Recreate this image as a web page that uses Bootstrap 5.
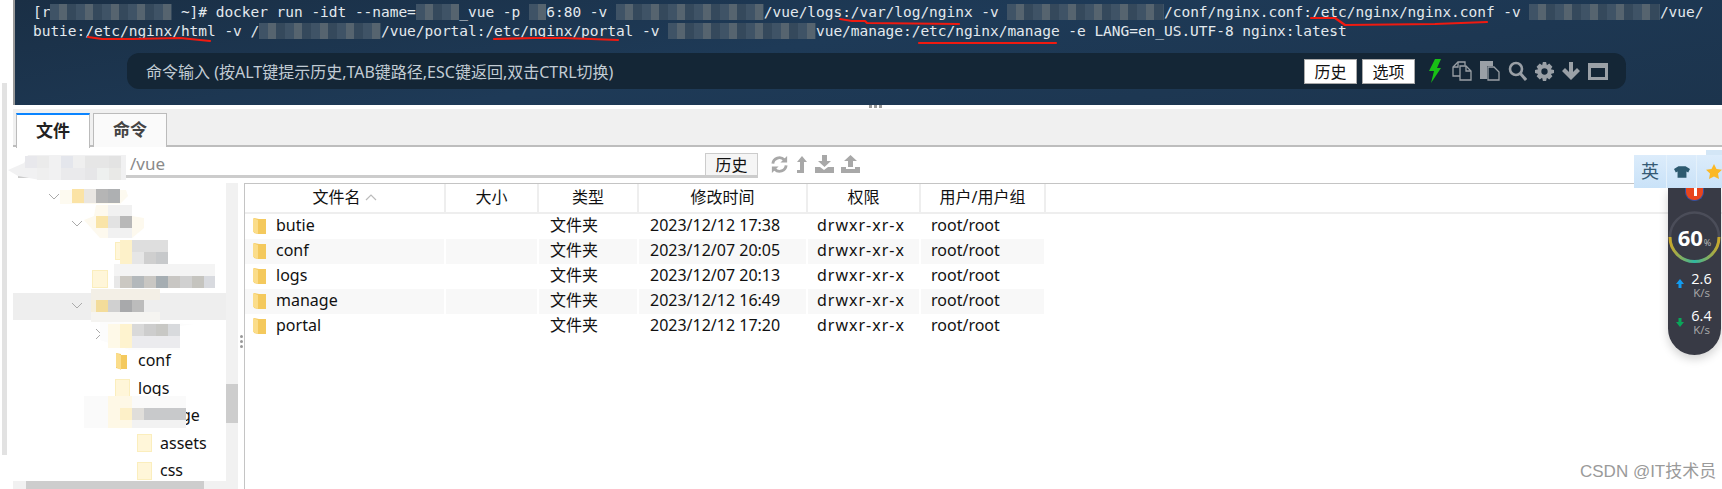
<!DOCTYPE html>
<html lang="zh">
<head>
<meta charset="utf-8">
<title>FinalShell</title>
<link href="https://cdn.jsdelivr.net/npm/bootstrap@5.3.0/dist/css/bootstrap.min.css" rel="stylesheet">
<style>
html,body{height:489px;overflow:hidden;background:#fff}
body{position:relative;font-family:"Noto Sans","Noto Sans CJK SC",sans-serif;font-size:16px;color:#111;line-height:1.2}
.shell{height:489px}
.edge{width:13px;background:#fff;padding:83px 6px 34px 2px}
.edge-bar{height:100%;background:linear-gradient(180deg,#e2e2e2 0 372px,#f6f6f6 372px)}
.term{height:105px;background:linear-gradient(170deg,#1a2f45 0%,#1e3a57 45%,#1c344d 100%);color:#e3e9ee;padding:3px 0 0 18px;border-left:2px solid #999}
.tline{font-family:"DejaVu Sans Mono",monospace;font-size:14.5px;line-height:19px;white-space:pre;letter-spacing:-.03px}
.mos{background:repeating-linear-gradient(90deg,#3f5366 0 9px,#56646f 9px 17px,#35495c 17px 26px);color:transparent}
.cmdbar{height:36px;margin:12px 96px 0 94px;padding:0 18px 0 19px;background:#142636;border-radius:12px;color:#c2ccd4;font-size:16px}
.cmdhint{padding-top:3px}
.tbtn{width:53px;height:25px;padding:2px 0 0;font-size:16px;line-height:1;color:#111;background:#fff;border:1px solid #aaa;border-radius:0}
.tbtn:hover{background:#fff;color:#111}
.gap-5px{gap:5px}
.ticons{gap:8px;margin-left:14px}
.bolt{margin-right:3px}
.grip{height:4px;background:#fff;padding-left:16px;gap:2px}
.grip i{width:3px;height:3px;background:#999;display:block}
.tabs-row{height:38px;background:#f0f0f0;border-bottom:2px solid #bdbdbd;padding-left:3px;padding-top:4px;gap:3px}
.ftab{width:74px;height:34px;font-size:17px;font-weight:700;color:#444;background:#fafafa;border:1px solid #bbb;border-bottom:0}
.ftab-on{background:#fff;color:#222;border:0;border-top:2px solid #0a84ff;border-left:1px solid #bbb;border-right:1px solid #bbb;height:35px}
.pathbar{height:31px;padding-left:5px;color:#8a8a8a;font-size:17px}
.pathtxt{width:687px;height:31px;padding-left:112px;border-bottom:3px solid #ccc;line-height:34px}
.hist{width:53px;height:25px;padding:0;margin:6px 0 0 0;background:#f5f5f5;border:1px solid #ccc;border-bottom:3px solid #ccc;border-radius:0;font-size:16px;line-height:1;color:#111}
.hist:hover{background:#f5f5f5;color:#111}
.picons{gap:7px;margin-left:12px;padding-top:8px}
.mainrow{min-height:0;margin-top:5px}
.tree{width:213px;flex:none;position:relative;overflow:hidden}
.tnode{height:27.4px;white-space:nowrap}
.tsel{background:#eee}
.l1{padding-left:34px}.l2{padding-left:57px}.l3{padding-left:79px}.l4{padding-left:102px}.l5{padding-left:124px}.lge{padding-left:168px}
.chev{width:14px;flex:none}
.tlabel{margin-left:8px}
.vbar{width:12px;flex:none;background:#f1f1f1;display:flex;flex-direction:column;justify-content:flex-end;padding-bottom:66px}
.vthumb{height:39px;background:#cdcdcd}
.hbar{position:absolute;left:0;right:0;bottom:0;height:8px;background:#f1f1f1}
.hthumb{position:absolute;left:13px;width:178px;top:0;bottom:0;background:#cdcdcd}
.split{width:6px;flex:none;gap:2px;padding-top:10px}
.split i{width:3px;height:3px;border-radius:50%;background:#999;display:block}
.fpane{border-left:1px solid #c4c4c4;border-top:1px solid #c4c4c4;min-width:0}
.frow{height:25px}
.fhead{height:30px;border-bottom:2px solid #eee}
.fc{flex:none;display:flex;align-items:center;height:100%;border-right:2px solid #fff;white-space:nowrap;padding-bottom:1px}
.fhead .fc{justify-content:center;border-right:2px solid #eee}
.c1{width:201px;padding-left:8px}.c2{width:93px}.c3{width:100px;padding-left:11px}.c4{width:169px;padding-left:11px}.c5{width:113px;padding-left:9px;letter-spacing:1px}.c6{width:125px;padding-left:10px}
.fhead .c1,.fhead .c2,.fhead .c3,.fhead .c4,.fhead .c5,.fhead .c6{padding-left:0;letter-spacing:0}
.striped{background:#f8f8f8}
.fname{margin-left:10px}
.ime{position:absolute;left:1634px;top:155px;width:88px;height:33px;background:linear-gradient(180deg,#dcecfb,#c9e2f8);z-index:3;color:#355a75;font-size:18px}
.ime-a{width:33px;height:100%;border-right:1px solid #e5f1fb}
.ime-b{width:30px;height:100%;border-right:1px solid #e5f1fb}
.ime-c{padding-left:9px}
.skin{position:absolute;left:1706px;top:150px;width:16px;height:24px;background:#d3e6f6;z-index:2}
.meter{position:absolute;left:1668px;top:188px;width:53px;height:167px;background:#383a45;border-radius:0 0 27px 27px;z-index:2;box-shadow:0 4px 10px rgba(0,0,0,.18);color:#fff}
.badge-dot{position:absolute;left:17px;top:0;width:19px;height:13px;background:#e8451d;border:1px solid #3250a0;border-top:0;border-radius:0 0 9px 9px}
.badge-dot::after{content:"";position:absolute;left:8px;top:0;width:3px;height:8px;background:#fff}
.ringwrap{position:absolute;left:0;top:22px;width:53px;height:54px}
.ringtxt{position:absolute;left:0;top:15px;width:100%;text-align:center;font-family:"Open Sans",sans-serif;font-weight:700;font-size:22px;line-height:24px;white-space:nowrap}
.ringtxt small{font-size:9px;font-weight:400;color:#bbb;margin-left:1px}
.speed{position:absolute;left:0;width:53px;text-align:center;padding-left:14px;line-height:15px;font-size:14.5px;font-family:"Open Sans",sans-serif}
.speed span{display:block;font-size:11.5px;color:#aaa;line-height:13px}
.sp1{top:83px}.sp2{top:120px}
.sparrow{position:absolute;left:8px}
.sa1{top:91px}.sa2{top:130px}
.mark-w{position:absolute;left:1580px;top:462px;font-family:"Liberation Sans","Noto Sans CJK SC",sans-serif;font-size:17px;color:#9a9a9a;z-index:2}
.over{position:absolute;left:0;top:0;pointer-events:none;z-index:2}
</style>
</head>
<body>
<div class="shell d-flex">
  <div class="edge flex-shrink-0"><div class="edge-bar"></div></div>
  <div class="flex-grow-1 d-flex flex-column min-w-0">
    <div class="term">
      <div class="tline">[r<span class="mos">              </span> ~]# docker run -idt --name=<span class="mos">     </span>_vue -p <span class="mos">  </span>6:80 -v <span class="mos">                 </span>/vue/logs:/var/log/nginx -v <span class="mos">                  </span>/conf/nginx.conf:/etc/nginx/nginx.conf -v <span class="mos">               </span>/vue/</div>
      <div class="tline">butie:/etc/nginx/html -v /<span class="mos">              </span>/vue/portal:/etc/nginx/portal -v <span class="mos">                 </span>vue/manage:/etc/nginx/manage -e LANG=en_US.UTF-8 nginx:latest</div>
      <div class="cmdbar d-flex align-items-center justify-content-between">
        <span class="cmdhint">命令输入 (按ALT键提示历史,TAB键路径,ESC键返回,双击CTRL切换)</span>
        <div class="d-flex align-items-center">
          <div class="d-flex gap-5px">
            <button type="button" class="btn tbtn">历史</button>
            <button type="button" class="btn tbtn">选项</button>
          </div>
          <div class="d-flex align-items-center ticons">
            <svg class="bolt" width="12" height="24" viewBox="0 0 12 24"><path d="M6 0h6L8 9h4L2 24l3-12H0z" fill="#18c015"/></svg>
            <svg width="20" height="20" viewBox="0 0 20 20" fill="none" stroke="#9aa0a6" stroke-width="1.300"><path d="M13 4.500V1H6L1 6v9h7"/><path d="M6 1v5H1"/><path d="M8 5h6l5 5v9H8z"/><path d="M14 5v5h5"/></svg>
            <svg width="20" height="20" viewBox="0 0 20 20"><path d="M0 0h13v5H7v13H0z" fill="#9aa0a6"/><path d="M8 6h6l5 5v8H8z" fill="none" stroke="#9aa0a6" stroke-width="1.300"/></svg>
            <svg width="19" height="20" viewBox="0 0 19 20" fill="none" stroke="#9aa0a6"><circle cx="8" cy="8" r="6" stroke-width="2.600"/><path d="M12 12l6 7" stroke-width="3"/></svg>
            <svg width="19" height="19" viewBox="0 0 24 24"><path fill="#9aa0a6" fill-rule="evenodd" d="M10 0h4l1 4 3-2 4 4-2 3 4 1v4l-4 1 2 3-4 4-3-2-1 4h-4l-1-4-3 2-4-4 2-3-4-1v-4l4-1-2-3 4-4 3 2zM12 8a4 4 0 1 0 0 8 4 4 0 0 0 0-8z"/></svg>
            <svg width="18" height="18" viewBox="0 0 18 18"><path d="M7 0h4v10l4-4 3 3-9 9-9-9 3-3 4 4z" fill="#9aa0a6"/></svg>
            <svg width="20" height="17" viewBox="0 0 20 17"><rect x="1.500" y="1.500" width="17" height="14" fill="none" stroke="#9aa0a6" stroke-width="3"/><rect x="1" y="1" width="18" height="4" fill="#9aa0a6"/></svg>
          </div>
        </div>
      </div>
    </div>
    <div class="grip d-flex justify-content-center"><i></i><i></i><i></i></div>
    <div class="tabs-row d-flex">
      <div class="ftab ftab-on d-flex align-items-center justify-content-center">文件</div>
      <div class="ftab d-flex align-items-center justify-content-center">命令</div>
    </div>
    <div class="pathbar d-flex">
      <div class="pathtxt">/vue</div>
      <button type="button" class="btn hist">历史</button>
      <div class="d-flex align-items-start picons">
        <svg width="19" height="19" viewBox="0 0 20 20" fill="none" stroke="#a8a8a8" stroke-width="3"><path d="M3 9a7 7 0 0 1 12-4"/><path d="M17 11a7 7 0 0 1-12 4"/><path d="M18 1v7h-7z" fill="#a8a8a8" stroke="none"/><path d="M2 19v-7h7z" fill="#a8a8a8" stroke="none"/></svg>
        <svg width="12" height="19" viewBox="0 0 12 19"><path d="M6 1l5 6H8v11H1v-3h3V7H1z" fill="#a8a8a8"/></svg>
        <svg width="19" height="19" viewBox="0 0 19 19"><path d="M7 0h5v6h4l-6.500 6L3 6h4zM0 12h5l4 3 4-3h6v6H0z" fill="#a8a8a8"/></svg>
        <svg width="19" height="19" viewBox="0 0 19 19"><path d="M9.500 0L16 6h-4v6H7V6H3zM0 12h5v2h9v-2h5v6H0z" fill="#a8a8a8"/></svg>
      </div>
    </div>
    <div class="mainrow d-flex flex-grow-1">
      <div class="tree">
        <div class="tnode l1 d-flex align-items-center"><svg class="chev" width="14" height="8" viewBox="0 0 14 8" fill="none" stroke="#aaa"><path d="M2 1l5 5 5-5"/></svg></div>
        <div class="tnode l2 d-flex align-items-center"><svg class="chev" width="14" height="8" viewBox="0 0 14 8" fill="none" stroke="#aaa"><path d="M2 1l5 5 5-5"/></svg></div>
        <div class="tnode l4 d-flex align-items-center"><svg width="15" height="18" viewBox="0 0 15 18"><rect x=".5" y=".5" width="14" height="17" fill="#fff6d9" stroke="#fbeebd"/></svg></div>
        <div class="tnode l3 d-flex align-items-center"><svg width="16" height="18" viewBox="0 0 16 18"><rect x=".5" y=".5" width="15" height="17" fill="#fff6d9" stroke="#fbeebd"/></svg></div>
        <div class="tnode tsel l2 d-flex align-items-center"><svg class="chev" width="14" height="8" viewBox="0 0 14 8" fill="none" stroke="#aaa"><path d="M2 1l5 5 5-5"/></svg></div>
        <div class="tnode l3 d-flex align-items-center"><svg width="14" height="14" viewBox="0 0 14 14" fill="none" stroke="#aaa"><path d="M4 2l5 5-5 5"/></svg></div>
        <div class="tnode l4 d-flex align-items-center"><svg width="15" height="18" viewBox="0 0 15 18"><path d="M1 1l5 1v1h6v14H5l-4-1z" fill="#f4c95d"/><path d="M1 1l5 2v15l-5-3z" fill="#fbdd8a"/></svg><span class="tlabel">conf</span></div>
        <div class="tnode l4 d-flex align-items-center"><svg width="15" height="18" viewBox="0 0 15 18"><rect x=".5" y=".5" width="14" height="17" fill="#fff6d9" stroke="#fbeebd"/></svg><span class="tlabel">logs</span></div>
        <div class="tnode lge d-flex align-items-center"><span>ge</span></div>
        <div class="tnode l5 d-flex align-items-center"><svg width="15" height="18" viewBox="0 0 15 18"><rect x=".5" y=".5" width="14" height="17" fill="#fff6d9" stroke="#fbeebd"/></svg><span class="tlabel">assets</span></div>
        <div class="tnode l5 d-flex align-items-center"><svg width="15" height="18" viewBox="0 0 15 18"><rect x=".5" y=".5" width="14" height="17" fill="#fff6d9" stroke="#fbeebd"/></svg><span class="tlabel">css</span></div>
        <div class="hbar"><div class="hthumb"></div></div>
      </div>
      <div class="vbar"><div class="vthumb"></div></div>
      <div class="split d-flex flex-column align-items-center justify-content-center"><i></i><i></i><i></i></div>
      <div class="fpane flex-grow-1">
        <div class="d-flex frow fhead">
          <div class="fc c1">文件名 <svg class="ms-1" width="12" height="7" viewBox="0 0 12 7" fill="none" stroke="#bbb" stroke-width="1.200"><path d="M1 6l5-5 5 5"/></svg></div>
          <div class="fc c2">大小</div><div class="fc c3">类型</div><div class="fc c4">修改时间</div><div class="fc c5">权限</div><div class="fc c6">用户/用户组</div>
        </div>
        <div class="d-flex frow"><div class="fc c1"><svg width="13" height="16" viewBox="0 0 13 16"><path d="M1 0l5 1h7v15H5l-4-1z" fill="#f4c95d"/><path d="M0 0l5 2v14l-5-2z" fill="#fbdd8a"/></svg><span class="fname">butie</span></div><div class="fc c2"></div><div class="fc c3">文件夹</div><div class="fc c4">2023/12/12 17:38</div><div class="fc c5">drwxr-xr-x</div><div class="fc c6">root/root</div></div>
        <div class="d-flex frow"><div class="fc c1 striped"><svg width="13" height="16" viewBox="0 0 13 16"><path d="M1 0l5 1h7v15H5l-4-1z" fill="#f4c95d"/><path d="M0 0l5 2v14l-5-2z" fill="#fbdd8a"/></svg><span class="fname">conf</span></div><div class="fc c2 striped"></div><div class="fc c3 striped">文件夹</div><div class="fc c4 striped">2023/12/07 20:05</div><div class="fc c5 striped">drwxr-xr-x</div><div class="fc c6 striped">root/root</div></div>
        <div class="d-flex frow"><div class="fc c1"><svg width="13" height="16" viewBox="0 0 13 16"><path d="M1 0l5 1h7v15H5l-4-1z" fill="#f4c95d"/><path d="M0 0l5 2v14l-5-2z" fill="#fbdd8a"/></svg><span class="fname">logs</span></div><div class="fc c2"></div><div class="fc c3">文件夹</div><div class="fc c4">2023/12/07 20:13</div><div class="fc c5">drwxr-xr-x</div><div class="fc c6">root/root</div></div>
        <div class="d-flex frow"><div class="fc c1 striped"><svg width="13" height="16" viewBox="0 0 13 16"><path d="M1 0l5 1h7v15H5l-4-1z" fill="#f4c95d"/><path d="M0 0l5 2v14l-5-2z" fill="#fbdd8a"/></svg><span class="fname">manage</span></div><div class="fc c2 striped"></div><div class="fc c3 striped">文件夹</div><div class="fc c4 striped">2023/12/12 16:49</div><div class="fc c5 striped">drwxr-xr-x</div><div class="fc c6 striped">root/root</div></div>
        <div class="d-flex frow"><div class="fc c1"><svg width="13" height="16" viewBox="0 0 13 16"><path d="M1 0l5 1h7v15H5l-4-1z" fill="#f4c95d"/><path d="M0 0l5 2v14l-5-2z" fill="#fbdd8a"/></svg><span class="fname">portal</span></div><div class="fc c2"></div><div class="fc c3">文件夹</div><div class="fc c4">2023/12/12 17:20</div><div class="fc c5">drwxr-xr-x</div><div class="fc c6">root/root</div></div>
      </div>
    </div>
  </div>
</div>
<svg class="over" width="1722" height="489" viewBox="0 0 1722 489" fill="none">
  <g stroke="#f01a10" stroke-width="2.200" stroke-linecap="round" stroke-linejoin="round">
    <path d="M840 19l12 2h13l2 2 92 1"/>
    <path d="M1311 18h24l10 7 90-1 52-2"/>
    <path d="M88 37l14 2 30 0 48-1 30 3"/>
    <path d="M494 39l40-1 30 0 54 2"/>
    <path d="M919 43l137 0"/>
  </g>
  <g stroke="none">
    <polygon points="28,155 126,155 126,180 40,180 18,176 8,170 24,163" fill="#f1f1f2"/>
    <rect x="25" y="156" width="12" height="12" fill="#e8e8ec"/><rect x="37" y="156" width="12" height="12" fill="#ebebeb"/><rect x="61" y="156" width="12" height="12" fill="#e4e6ec"/><rect x="73" y="156" width="12" height="12" fill="#efefef"/><rect x="85" y="156" width="24" height="12" fill="#e6e6e6"/><rect x="109" y="156" width="12" height="12" fill="#e3e3e3"/>
    <rect x="37" y="168" width="12" height="12" fill="#efefef"/><rect x="61" y="168" width="24" height="12" fill="#eaeaec"/><rect x="85" y="168" width="12" height="12" fill="#e6e6e8"/><rect x="97" y="168" width="12" height="12" fill="#eef0ef"/><rect x="109" y="168" width="12" height="12" fill="#e9e9e7"/>
    <polygon points="60,190 126,190 128,196 120,204 60,204" fill="#fdfaf0"/>
    <rect x="72" y="189" width="12" height="14" fill="#fbe3a5"/><rect x="84" y="189" width="12" height="14" fill="#e9e6e2"/><rect x="96" y="189" width="12" height="14" fill="#b5b5b5"/><rect x="108" y="189" width="12" height="14" fill="#aeb0b2"/>
    <polygon points="96,205 120,205 120,216 132,216 144,218 144,228 132,238 100,238 84,220 94,216" fill="#fdf9ee"/>
    <rect x="96" y="216" width="12" height="12" fill="#f9e4a8"/><rect x="108" y="216" width="12" height="12" fill="#e2e2e2"/><rect x="120" y="216" width="12" height="12" fill="#b8b8b8"/>
    <rect x="108" y="205" width="24" height="11" fill="#f1f1f1"/><rect x="108" y="228" width="24" height="10" fill="#f1f1f1"/>
    <rect x="120" y="240" width="12" height="24" fill="#fdf1c9"/><rect x="132" y="240" width="36" height="12" fill="#dedede"/><rect x="132" y="252" width="12" height="12" fill="#e6e6e6"/><rect x="144" y="252" width="12" height="12" fill="#cfcfcf"/><rect x="156" y="252" width="12" height="12" fill="#c7c9cb"/>
    <rect x="114" y="264" width="101" height="12" fill="#f4f4f4"/>
    <rect x="114" y="276" width="6" height="12" fill="#e8e8e8"/><rect x="120" y="276" width="12" height="12" fill="#cbc8c2"/><rect x="132" y="276" width="12" height="12" fill="#b3b8bb"/><rect x="144" y="276" width="12" height="12" fill="#c9c7c3"/><rect x="156" y="276" width="12" height="12" fill="#a5adb2"/><rect x="168" y="276" width="12" height="12" fill="#c8c6c3"/><rect x="180" y="276" width="12" height="12" fill="#d0d0d0"/><rect x="192" y="276" width="12" height="12" fill="#c5c4bf"/><rect x="204" y="276" width="11" height="12" fill="#d8dadf"/>
    <rect x="91" y="289" width="69" height="11" fill="#f3efe6"/><rect x="91" y="312" width="69" height="10" fill="#f5f4f1"/>
    <rect x="96" y="300" width="12" height="12" fill="#f3dc9a"/><rect x="108" y="300" width="12" height="12" fill="#d0d0d0"/><rect x="120" y="300" width="12" height="12" fill="#a8a9ab"/><rect x="132" y="300" width="12" height="12" fill="#bcbcbc"/><rect x="91" y="300" width="5" height="12" fill="#f5efdc"/>
    <polygon points="100,322 195,324 180,326 180,350 130,350 100,340" fill="#fcfcfc"/>
    <rect x="108" y="324" width="12" height="24" fill="#fef9e8"/><rect x="120" y="324" width="12" height="24" fill="#fef3cf"/><rect x="132" y="324" width="12" height="12" fill="#d9d9d9"/><rect x="144" y="324" width="12" height="12" fill="#cdcdcd"/><rect x="156" y="324" width="12" height="12" fill="#c8c8c5"/><rect x="168" y="324" width="12" height="12" fill="#d8dadd"/><rect x="132" y="336" width="48" height="12" fill="#ebebee"/>
    <rect x="84" y="396" width="102" height="32" fill="#fafafa"/>
    <rect x="108" y="396" width="24" height="32" fill="#fef8e6"/><rect x="120" y="408" width="12" height="12" fill="#fdf0c8"/><rect x="132" y="408" width="12" height="12" fill="#e0deda"/><rect x="144" y="408" width="42" height="12" fill="#c8c9cb"/><rect x="132" y="420" width="54" height="8" fill="#f2f2f2"/>
  </g>
</svg>
<div class="skin"></div>
<div class="ime d-flex align-items-center">
  <div class="ime-a d-flex align-items-center justify-content-center">英</div>
  <div class="ime-b d-flex align-items-center justify-content-center"><svg width="16" height="12" viewBox="0 0 18 13"><path d="M5 0h8l5 3-2 4-2-1v7H4V6L2 7 0 3z" fill="#2d5a70"/></svg></div>
  <div class="ime-c d-flex align-items-center"><svg width="16" height="15" viewBox="0 0 16 15"><path d="M8 0l2.500 5 5.500.8-4 3.800 1 5.400-5-2.600L3 15l1-5.400-4-3.800L5.500 5z" fill="#fbb824"/></svg></div>
</div>
<div class="meter">
  <div class="badge-dot"></div>
  <div class="ringwrap">
    <svg width="53" height="54" viewBox="0 0 53 54" fill="none"><defs><linearGradient id="rg" x1="0" y1="0" x2="1" y2="0"><stop offset="0" stop-color="#c9a72a"/><stop offset=".5" stop-color="#2fb7a0"/><stop offset="1" stop-color="#c9a72a"/></linearGradient></defs><circle cx="26.500" cy="27" r="24.500" stroke="#4b4d59" stroke-width="2.500"/><path d="M2 27a24.500 24.500 0 0 0 49 0" stroke="url(#rg)" stroke-width="3"/></svg>
    <div class="ringtxt">60<small>%</small></div>
  </div>
  <svg class="sparrow sa1" width="8" height="9" viewBox="0 0 8 9"><path d="M4 0l4 5H5.500v4h-3V5H0z" fill="#129cf0"/></svg>
  <div class="speed sp1">2.6<span>K/s</span></div>
  <svg class="sparrow sa2" width="8" height="9" viewBox="0 0 8 9"><path d="M4 9l4-5H5.500V0h-3v4H0z" fill="#0aa65a"/></svg>
  <div class="speed sp2">6.4<span>K/s</span></div>
</div>
<div class="mark-w">CSDN @IT技术员</div>
<script src="https://cdn.jsdelivr.net/npm/bootstrap@5.3.0/dist/js/bootstrap.bundle.min.js"></script>
</body>
</html>
